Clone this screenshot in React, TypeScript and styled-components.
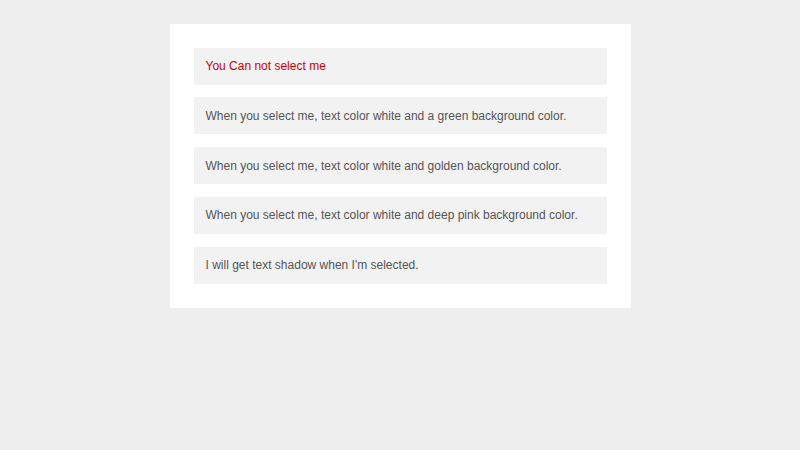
import React from "react";
import styled, { createGlobalStyle } from "styled-components";

const GlobalStyle = createGlobalStyle`
    html, body {
        margin: 0;
        padding: 0;
        background: #eeeeee;
        font-family: "Liberation Sans", Arial, sans-serif;
    }
`;

const Page = styled.main`
    display: flex;
    justify-content: center;
    padding-top: 23.5px;
`;

const Card = styled.section`
    width: 413px;
    background: #ffffff;
    padding: 24px;
    display: flex;
    flex-direction: column;
    gap: 12.8px;
`;

const Item = styled.p<{ $locked?: boolean }>`
    margin: 0;
    height: 37px;
    display: flex;
    align-items: center;
    padding: 0 12px;
    background: #f2f2f2;
    font-size: 12px;
    color: ${(p) => (p.$locked ? "#cc0000" : "#555555")};
    user-select: ${(p) => (p.$locked ? "none" : "text")};
`;

const Green = styled(Item)`
    &::selection {
        color: #fff;
        background: green;
    }
`;

const Golden = styled(Item)`
    &::selection {
        color: #fff;
        background: goldenrod;
    }
`;

const Pink = styled(Item)`
    &::selection {
        color: #fff;
        background: deeppink;
    }
`;

const Shadow = styled(Item)`
    &::selection {
        text-shadow: 1px 1px 2px #333;
    }
`;

const App = () => {
    return (
        <>
            <GlobalStyle />
            <Page>
                <Card>
                    <Item $locked>You Can not select me</Item>
                    <Green>When you select me, text color white and a green background color.</Green>
                    <Golden>When you select me, text color white and golden background color.</Golden>
                    <Pink>When you select me, text color white and deep pink background color.</Pink>
                    <Shadow>I will get text shadow when I'm selected.</Shadow>
                </Card>
            </Page>
        </>
    );
};

export default App;
